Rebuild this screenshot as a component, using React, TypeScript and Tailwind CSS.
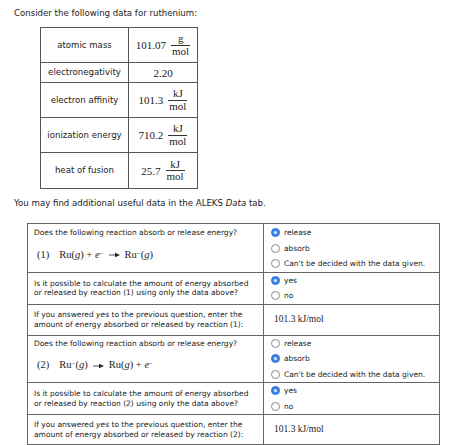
import React from "react";

const sans = "font-['DejaVu_Sans',Verdana,sans-serif]";
const serif = "font-['Liberation_Serif','Times_New_Roman',serif]";

function Frac({ top }: { top: string }) {
  return (
    <span className="inline-flex flex-col items-center align-middle ml-[5px] leading-[11.5px]">
      <span className="px-[1px]">{top}</span>
      <span className="border-t border-[#333] w-full" />
      <span className="px-[1px]">mol</span>
    </span>
  );
}

function Radio({ checked, label }: { checked?: boolean; label: string }) {
  return (
    <div className="flex items-center h-[15.5px] gap-[4px] whitespace-nowrap">
      {checked ? (
        <span className="flex items-center justify-center w-[9px] h-[9px] rounded-full bg-[#3d86ee] border border-[#2f6fd6]">
          <span className="w-[3px] h-[3px] rounded-full bg-[#dfeaff]" />
        </span>
      ) : (
        <span className="w-[9px] h-[9px] rounded-full bg-white border border-[#8a8a8a]" />
      )}
      <span>{label}</span>
    </div>
  );
}

function Arrow() {
  return (
    <svg width="11" height="6" viewBox="0 0 11 6" className="inline-block mx-[5px] align-middle">
      <line x1="0" y1="3" x2="7" y2="3" stroke="#222" strokeWidth="0.8" />
      <polygon points="6,0.8 11,3 6,5.2" fill="#222" />
    </svg>
  );
}

function Minus() {
  return <sup className="text-[7px] relative -top-[2px]">−</sup>;
}

function Reaction({ n }: { n: 1 | 2 }) {
  return (
    <div className={`${serif} text-[10.5px] leading-[14px] text-[#222] pl-[3px] whitespace-nowrap`}>
      <span>({n})</span>
      <span className="inline-block w-[10px]" />
      {n === 1 ? (
        <>
          Ru(<i>g</i>) + <i>e</i>
          <Minus />
          <Arrow />
          Ru
          <Minus />
          (<i>g</i>)
        </>
      ) : (
        <>
          Ru
          <Minus />
          (<i>g</i>)
          <Arrow />
          Ru(<i>g</i>) + <i>e</i>
          <Minus />
        </>
      )}
    </div>
  );
}

const rows = [
  { label: "atomic mass", value: "101.07", unit: "g", h: "h-[35px]" },
  { label: "electronegativity", value: "2.20", unit: "", h: "h-[20px]" },
  { label: "electron affinity", value: "101.3", unit: "kJ", h: "h-[35px]" },
  { label: "ionization energy", value: "710.2", unit: "kJ", h: "h-[35px]" },
  { label: "heat of fusion", value: "25.7", unit: "kJ", h: "h-[36px]" },
];

export default function App() {
  return (
    <div className={`${sans} w-[474px] h-[445px] overflow-hidden bg-white text-[#222] text-[8.6px]`}>
      <div className="pl-[14px] pt-[7px] leading-[12px]">Consider the following data for ruthenium:</div>

      <table className="ml-[40px] mt-[8px] border-collapse">
        <tbody>
          {rows.map((r) => (
            <tr key={r.label} className={r.h}>
              <td className="w-[88px] border border-[#555] text-center p-0">{r.label}</td>
              <td className={`w-[69px] border border-[#555] text-center p-0 ${serif} text-[11px]`}>
                <span className="align-middle">{r.value}</span>
                {r.unit && <Frac top={r.unit} />}
              </td>
            </tr>
          ))}
        </tbody>
      </table>

      <div className="pl-[14px] mt-[8px] leading-[12px]">
        You may find additional useful data in the ALEKS <i>Data</i> tab.
      </div>

      <table className="ml-[27px] mt-[14px] border-collapse text-[7.5px] leading-[9.5px]">
        <tbody>
          <tr className="h-[48px]">
            <td className="w-[236px] border border-[#666] align-top px-[6px] pt-[4px] p-0">
              <div>Does the following reaction absorb or release energy?</div>
              <div className="mt-[10px]">
                <Reaction n={1} />
              </div>
            </td>
            <td className="w-[176px] border border-[#666] align-top pl-[7px] pt-[1px]">
              <Radio checked label="release" />
              <Radio label="absorb" />
              <Radio label="Can't be decided with the data given." />
            </td>
          </tr>
          <tr className="h-[31px]">
            <td className="border border-[#666] px-[6px]">
              <div>Is it possible to calculate the amount of energy absorbed</div>
              <div>or released by reaction (1) using only the data above?</div>
            </td>
            <td className="border border-[#666] align-top pl-[7px] pt-[0px]">
              <Radio checked label="yes" />
              <Radio label="no" />
            </td>
          </tr>
          <tr className="h-[31px]">
            <td className="border border-[#666] px-[6px]">
              <div>
                If you answered <i>yes</i> to the previous question, enter the
              </div>
              <div>amount of energy absorbed or released by reaction (1):</div>
            </td>
            <td className={`border border-[#666] pl-[10px] ${serif} text-[9.5px]`}>101.3 kJ/mol</td>
          </tr>
          <tr className="h-[47px]">
            <td className="border border-[#666] align-top px-[6px] pt-[3px]">
              <div>Does the following reaction absorb or release energy?</div>
              <div className="mt-[10px]">
                <Reaction n={2} />
              </div>
            </td>
            <td className="border border-[#666] align-top pl-[7px] pt-[0px]">
              <Radio label="release" />
              <Radio checked label="absorb" />
              <Radio label="Can't be decided with the data given." />
            </td>
          </tr>
          <tr className="h-[30px]">
            <td className="border border-[#666] px-[6px]">
              <div>Is it possible to calculate the amount of energy absorbed</div>
              <div>or released by reaction (2) using only the data above?</div>
            </td>
            <td className="border border-[#666] align-top pl-[7px] pt-[0px]">
              <Radio checked label="yes" />
              <Radio label="no" />
            </td>
          </tr>
          <tr className="h-[30px]">
            <td className="border border-[#666] px-[6px]">
              <div>
                If you answered <i>yes</i> to the previous question, enter the
              </div>
              <div>amount of energy absorbed or released by reaction (2):</div>
            </td>
            <td className={`border border-[#666] pl-[10px] ${serif} text-[9.5px]`}>101.3 kJ/mol</td>
          </tr>
        </tbody>
      </table>

      <div className="ml-[327px] mt-[3px] w-[110px] h-[20px] border border-[#ccc] rounded-[2px]" />
    </div>
  );
}
